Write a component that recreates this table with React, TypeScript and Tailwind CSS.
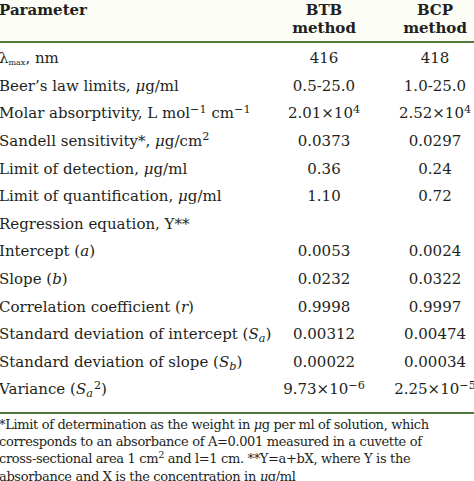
import React from "react";

type Row = { label: React.ReactNode; btb?: React.ReactNode; bcp?: React.ReactNode };

const mu = <i>μ</i>;

const rows: Row[] = [
  {
    label: (
      <>
        λ<sub className="text-[8px]">max</sub>, nm
      </>
    ),
    btb: "416",
    bcp: "418",
  },
  { label: <>Beer’s law limits, {mu}g/ml</>, btb: "0.5-25.0", bcp: "1.0-25.0" },
  {
    label: (
      <>
        Molar absorptivity, L mol<sup>−1</sup> cm<sup>−1</sup>
      </>
    ),
    btb: (
      <>
        2.01×10<sup>4</sup>
      </>
    ),
    bcp: (
      <>
        2.52×10<sup>4</sup>
      </>
    ),
  },
  {
    label: (
      <>
        Sandell sensitivity*, {mu}g/cm<sup>2</sup>
      </>
    ),
    btb: "0.0373",
    bcp: "0.0297",
  },
  { label: <>Limit of detection, {mu}g/ml</>, btb: "0.36", bcp: "0.24" },
  { label: <>Limit of quantification, {mu}g/ml</>, btb: "1.10", bcp: "0.72" },
  { label: "Regression equation, Y**" },
  { label: <>Intercept (<i>a</i>)</>, btb: "0.0053", bcp: "0.0024" },
  { label: <>Slope (<i>b</i>)</>, btb: "0.0232", bcp: "0.0322" },
  { label: <>Correlation coefficient (<i>r</i>)</>, btb: "0.9998", bcp: "0.9997" },
  {
    label: (
      <>
        Standard deviation of intercept (<i>S</i>
        <sub className="italic">a</sub>)
      </>
    ),
    btb: "0.00312",
    bcp: "0.00474",
  },
  {
    label: (
      <>
        Standard deviation of slope (<i>S</i>
        <sub className="italic">b</sub>)
      </>
    ),
    btb: "0.00022",
    bcp: "0.00034",
  },
  {
    label: (
      <>
        Variance (<i>S</i>
        <sub className="italic">a</sub>
        <sup className="ml-[1px]">2</sup>)
      </>
    ),
    btb: (
      <>
        9.73×10<sup>−6</sup>
      </>
    ),
    bcp: (
      <>
        2.25×10<sup>−5</sup>
      </>
    ),
  },
];

export default function App() {
  return (
    <div
      className="w-[474px] h-[481px] overflow-hidden bg-white text-[#231f20]"
      style={{ fontFamily: '"DejaVu Serif", "Liberation Serif", serif' }}
    >
      <div className="w-[492px] -ml-[1px]">
        <div className="grid grid-cols-[270px_110px_112px] font-bold text-[15px] leading-[18px] pt-[1px] pb-[4px] border-b-2 border-[#4f7a3a] bg-[#fbfdf6]">
          <div>Parameter</div>
          <div className="text-center">
            BTB
            <br />
            method
          </div>
          <div className="text-center">
            BCP
            <br />
            method
          </div>
        </div>
        <div className="pt-[2px] pb-[8px] border-b-2 border-[#4f7a3a] text-[15px]">
          {rows.map((r, i) => (
            <div key={i} className="grid grid-cols-[270px_110px_112px] h-[27.6px] items-center leading-none">
              <div className="whitespace-nowrap">{r.label}</div>
              <div className="text-center whitespace-nowrap">{r.btb}</div>
              <div className="text-center whitespace-nowrap">{r.bcp}</div>
            </div>
          ))}
        </div>
        <p className="text-[13px] tracking-[-0.35px] leading-[17.3px] pt-[2px] whitespace-nowrap">
          *Limit of determination as the weight in {mu}g per ml of solution, which
          <br />
          corresponds to an absorbance of A=0.001 measured in a cuvette of
          <br />
          cross-sectional area 1 cm<sup>2</sup> and l=1 cm. **Y=a+bX, where Y is the
          <br />
          absorbance and X is the concentration in {mu}g/ml
        </p>
      </div>
    </div>
  );
}
